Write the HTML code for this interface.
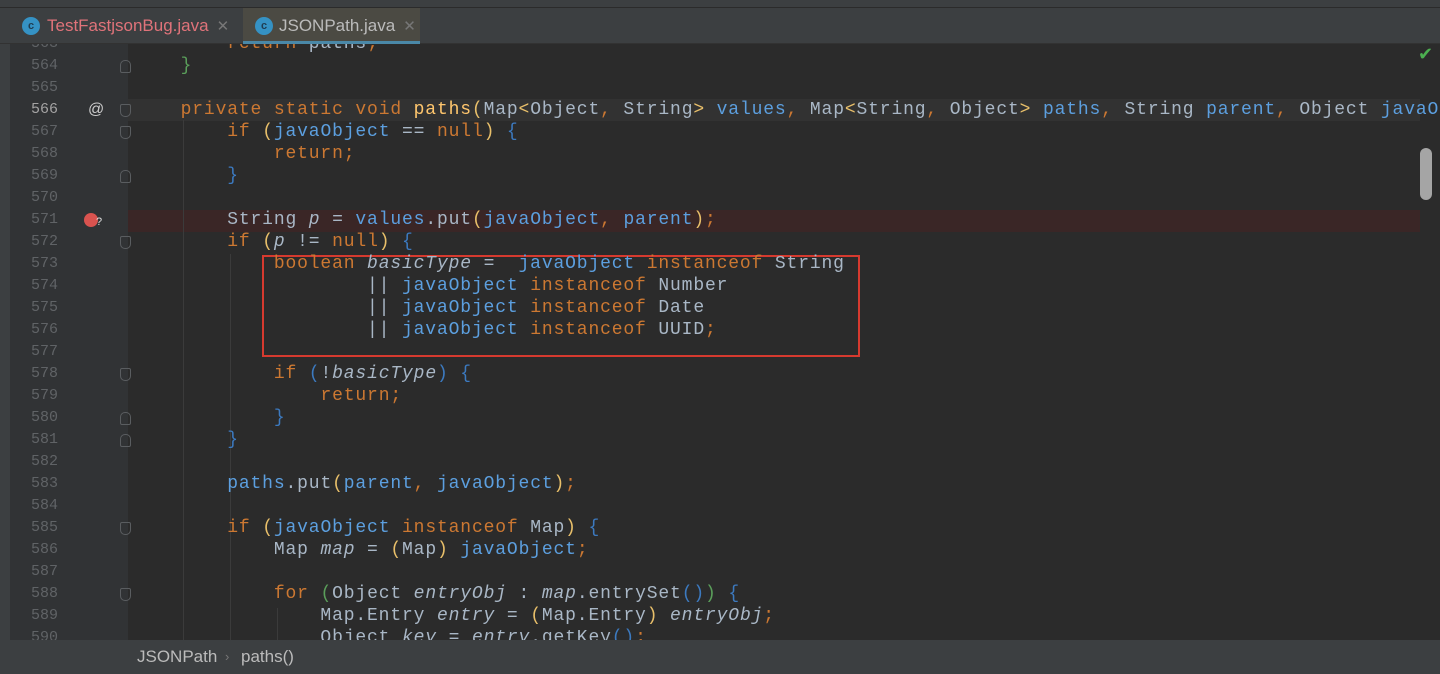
<!DOCTYPE html>
<html><head><meta charset="utf-8"><style>
*{margin:0;padding:0;box-sizing:border-box}
body{width:1440px;height:674px;overflow:hidden;background:#2b2b2b;position:relative;font-family:"Liberation Sans",sans-serif}
#top{position:absolute;left:0;top:0;width:1440px;height:8px;background:#3c3f41;border-bottom:1px solid #2b2b2b;z-index:5}
#tabs{position:absolute;left:0;top:8px;width:1440px;height:36px;background:#3c3f41;border-bottom:1px solid #323232;z-index:5}
.tab{position:absolute;top:0;height:36px;font-size:17px;line-height:36px;color:#bbb}
.ic{position:absolute;top:9px;width:18px;height:18px;border-radius:50%;background:#3592c4;color:#1f3d52;font-size:11px;font-weight:bold;line-height:18px;text-align:center}
.x{color:#777;font-size:15px;margin-left:8px}
#ed{position:absolute;left:0;top:44px;width:1440px;height:596px;overflow:hidden}
#in{position:absolute;left:0;top:-42px;width:1440px;height:700px}
#gut{position:absolute;left:0;top:0;width:128px;height:700px;background:#313335}
#gutl{position:absolute;left:0;top:0;width:10px;height:700px;background:#3c3f41}
.ln{position:absolute;left:10px;width:48px;text-align:right;font-family:"Liberation Mono",monospace;font-size:15px;color:#606366;height:22px;line-height:22px}
.cl{position:absolute;left:134px;font-family:"Liberation Mono",monospace;font-size:18px;letter-spacing:0.85px;color:#a9b7c6;white-space:pre;height:22px;line-height:22px}
.k{color:#cc7832}.b{color:#5c9fdf}.i{font-style:italic}.y{color:#e8bf6a}.g{color:#5a9e5a}.bl{color:#3c7ac0}
.fold{position:absolute;left:120px;width:11px;height:13px;border:1px solid #5a5d60;border-radius:2px 2px 5px 5px}
.foldu{border-radius:5px 5px 2px 2px}
#bc{position:absolute;left:0;top:640px;width:1440px;height:34px;background:#3c3f41;color:#bbb;font-size:16px;line-height:34px}
.vline{position:absolute;width:1px;background:#3b3b3b}
</style></head><body>
<div id="top"></div>
<div id="tabs">
 <div class="tab" style="left:18px;width:225px"><div class="ic" style="left:4px">c</div><span style="margin-left:29px;color:#e0737a">TestFastjsonBug.java</span><span class="x">✕</span></div>
 <div class="tab" style="left:243px;width:177px;background:#4b4a43;border-bottom:3px solid #4a88a8"><div class="ic" style="left:12px">c</div><span style="margin-left:36px">JSONPath.java</span><span class="x">✕</span></div>
</div>
<div id="ed"><div id="in">
<div id="gut"></div><div id="gutl"></div>
<div style="position:absolute;left:128px;top:97px;width:1292px;height:22px;background:#323232"></div>
<div style="position:absolute;left:128px;top:208px;width:1292px;height:22px;background:#3a2626"></div>
<div class="vline" style="left:183px;top:118px;height:580px"></div>
<div class="vline" style="left:230px;top:252px;height:446px"></div>
<div class="vline" style="left:277px;top:606px;height:90px"></div>
<div style="position:absolute;left:1420px;top:146px;width:12px;height:52px;border-radius:6px;background:#a5a5a5"></div>
<div style="position:absolute;left:1418px;top:42px;color:#4caf50;font-size:18px">✔</div>
<div style="position:absolute;left:84px;top:211px;width:14px;height:14px;border-radius:50%;background:#d9534f"></div>
<div style="position:absolute;left:96px;top:214px;color:#ddd;font-size:11px">?</div>
<div style="position:absolute;left:88px;top:97px;color:#ccc;font-size:16px;line-height:22px">@</div>
<div style="position:absolute;left:262px;top:253px;width:598px;height:102px;border:2px solid #d63a2f"></div>

<div class="ln" style="top:31px">563</div>
<div class="ln" style="top:53px">564</div><div class="ln" style="top:75px">565</div><div class="ln" style="top:97px;color:#a4a3a3">566</div>
<div class="ln" style="top:119px">567</div><div class="ln" style="top:141px">568</div><div class="ln" style="top:163px">569</div>
<div class="ln" style="top:185px">570</div><div class="ln" style="top:207px">571</div><div class="ln" style="top:229px">572</div>
<div class="ln" style="top:251px">573</div><div class="ln" style="top:273px">574</div><div class="ln" style="top:295px">575</div>
<div class="ln" style="top:317px">576</div><div class="ln" style="top:339px">577</div><div class="ln" style="top:361px">578</div>
<div class="ln" style="top:383px">579</div><div class="ln" style="top:405px">580</div><div class="ln" style="top:427px">581</div>
<div class="ln" style="top:449px">582</div><div class="ln" style="top:471px">583</div><div class="ln" style="top:493px">584</div>
<div class="ln" style="top:515px">585</div><div class="ln" style="top:537px">586</div><div class="ln" style="top:559px">587</div>
<div class="ln" style="top:581px">588</div><div class="ln" style="top:603px">589</div><div class="ln" style="top:625px">590</div>

<div class="fold foldu" style="top:58px"></div><div class="fold" style="top:102px"></div><div class="fold" style="top:124px"></div>
<div class="fold foldu" style="top:168px"></div><div class="fold" style="top:234px"></div><div class="fold" style="top:366px"></div>
<div class="fold foldu" style="top:410px"></div><div class="fold foldu" style="top:432px"></div><div class="fold" style="top:520px"></div>
<div class="fold" style="top:586px"></div>

<div class="cl" style="top:31px">        <span class="k">return</span> paths<span class="k">;</span></div>
<div class="cl" style="top:53px">    <span class="g">}</span></div>
<div class="cl" style="top:97px">    <span class="k">private static void</span> <span style="color:#ffc66d">paths</span><span class="y">(</span>Map<span class="y">&lt;</span>Object<span class="k">,</span> String<span class="y">&gt;</span> <span class="b">values</span><span class="k">,</span> Map<span class="y">&lt;</span>String<span class="k">,</span> Object<span class="y">&gt;</span> <span class="b">paths</span><span class="k">,</span> String <span class="b">parent</span><span class="k">,</span> Object <span class="b">javaObject</span></div>
<div class="cl" style="top:119px">        <span class="k">if</span> <span class="y">(</span><span class="b">javaObject</span> == <span class="k">null</span><span class="y">)</span> <span class="bl">{</span></div>
<div class="cl" style="top:141px">            <span class="k">return;</span></div>
<div class="cl" style="top:163px">        <span class="bl">}</span></div>
<div class="cl" style="top:207px">        String <span class="i">p</span> = <span class="b">values</span>.put<span class="y">(</span><span class="b">javaObject</span><span class="k">,</span> <span class="b">parent</span><span class="y">)</span><span class="k">;</span></div>
<div class="cl" style="top:229px">        <span class="k">if</span> <span class="y">(</span><span class="i">p</span> != <span class="k">null</span><span class="y">)</span> <span class="bl">{</span></div>
<div class="cl" style="top:251px">            <span class="k">boolean</span> <span class="i">basicType</span> =  <span class="b">javaObject</span> <span class="k">instanceof</span> String</div>
<div class="cl" style="top:273px">                    || <span class="b">javaObject</span> <span class="k">instanceof</span> Number</div>
<div class="cl" style="top:295px">                    || <span class="b">javaObject</span> <span class="k">instanceof</span> Date</div>
<div class="cl" style="top:317px">                    || <span class="b">javaObject</span> <span class="k">instanceof</span> UUID<span class="k">;</span></div>
<div class="cl" style="top:361px">            <span class="k">if</span> <span class="bl">(</span>!<span class="i">basicType</span><span class="bl">)</span> <span class="bl">{</span></div>
<div class="cl" style="top:383px">                <span class="k">return;</span></div>
<div class="cl" style="top:405px">            <span class="bl">}</span></div>
<div class="cl" style="top:427px">        <span class="bl">}</span></div>
<div class="cl" style="top:471px">        <span class="b">paths</span>.put<span class="y">(</span><span class="b">parent</span><span class="k">,</span> <span class="b">javaObject</span><span class="y">)</span><span class="k">;</span></div>
<div class="cl" style="top:515px">        <span class="k">if</span> <span class="y">(</span><span class="b">javaObject</span> <span class="k">instanceof</span> Map<span class="y">)</span> <span class="bl">{</span></div>
<div class="cl" style="top:537px">            Map <span class="i">map</span> = <span class="y">(</span>Map<span class="y">)</span> <span class="b">javaObject</span><span class="k">;</span></div>
<div class="cl" style="top:581px">            <span class="k">for</span> <span class="g">(</span>Object <span class="i">entryObj</span> : <span class="i">map</span>.entrySet<span class="bl">()</span><span class="g">)</span> <span class="bl">{</span></div>
<div class="cl" style="top:603px">                Map.Entry <span class="i">entry</span> = <span class="y">(</span>Map.Entry<span class="y">)</span> <span class="i">entryObj</span><span class="k">;</span></div>
<div class="cl" style="top:625px">                Object <span class="i">key</span> = <span class="i">entry</span>.getKey<span class="bl">()</span><span class="k">;</span></div>
</div></div>
<div id="bc"><span style="position:absolute;left:137px;font-size:17px">JSONPath</span><span style="position:absolute;left:225px;color:#777;font-size:13px">›</span><span style="position:absolute;left:241px;font-size:17px">paths()</span></div>
</body></html>
